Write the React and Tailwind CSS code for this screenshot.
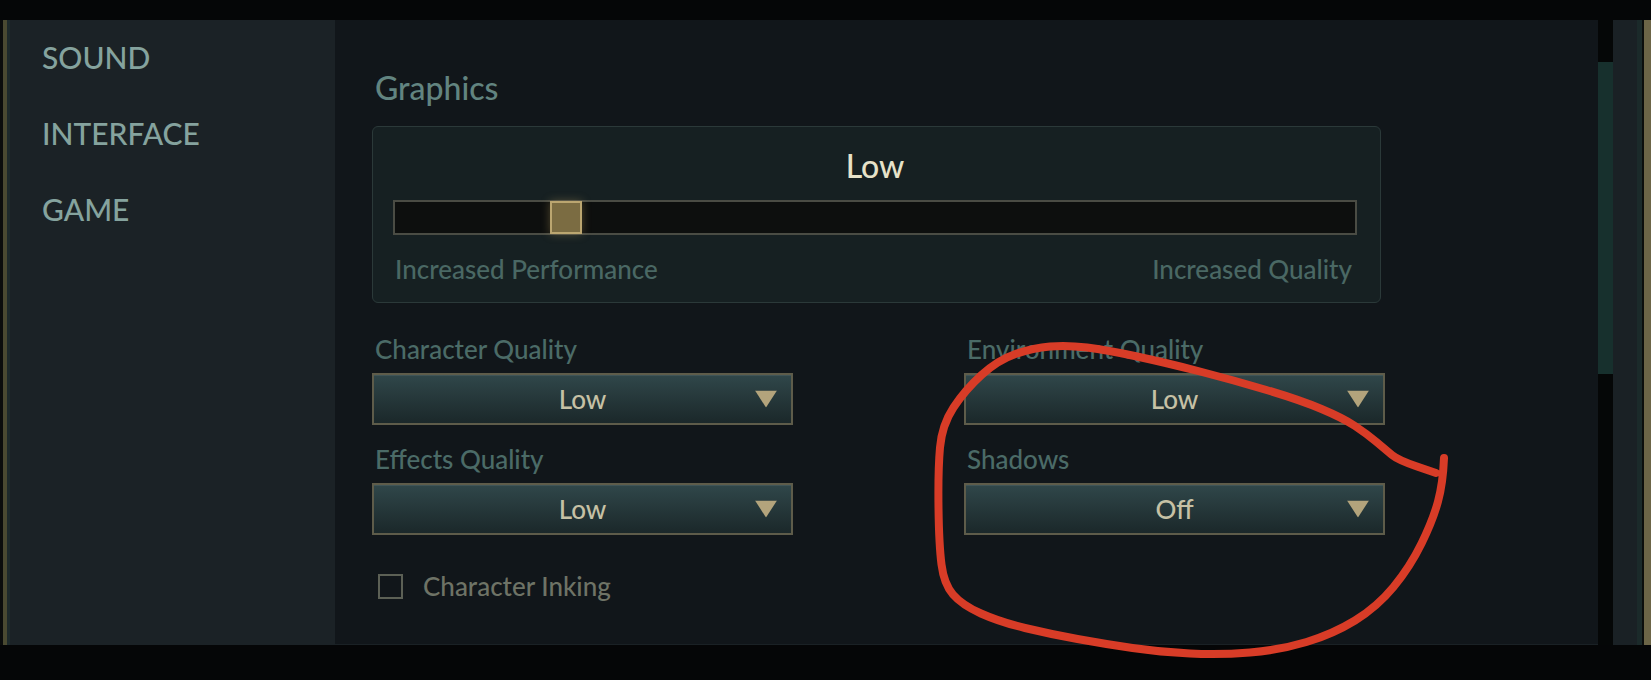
import React from 'react';

const menu = ['SOUND', 'INTERFACE', 'GAME'];

const fields = [
  { label: 'Character Quality', value: 'Low' },
  { label: 'Environment Quality', value: 'Low' },
  { label: 'Effects Quality', value: 'Low' },
  { label: 'Shadows', value: 'Off' },
];

// hand drawn red loop, page coordinates
const scribble = [
  [1444, 458], [1443, 483], [1433, 520], [1410, 567], [1377, 607], [1333, 634],
  [1280, 650], [1220, 655], [1160, 652], [1105, 644], [1050, 634], [1000, 622],
  [962, 605], [944, 584], [939, 545], [938, 470], [942, 425], [965, 390],
  [998, 360], [1033, 348], [1067, 345], [1107, 350], [1167, 363], [1233, 380],
  [1300, 400], [1343, 418], [1367, 434], [1386, 450], [1398, 460], [1436, 473],
];

function smoothPath(pts) {
  let d = `M${pts[0][0]} ${pts[0][1]}`;
  for (let i = 1; i < pts.length - 1; i++) {
    const mx = (pts[i][0] + pts[i + 1][0]) / 2;
    const my = (pts[i][1] + pts[i + 1][1]) / 2;
    d += ` Q${pts[i][0]} ${pts[i][1]} ${mx} ${my}`;
  }
  const last = pts[pts.length - 1];
  return d + ` L${last[0]} ${last[1]}`;
}

function Dropdown({ label, value }) {
  return (
    <div>
      <div className="pl-[3px] text-[26px] leading-none text-[#4b6b67]">{label}</div>
      <div className="relative mt-[11px] flex h-[52px] items-center justify-center border-2 border-[#5e5c4a] bg-linear-to-b from-[#30474a] to-[#1b282a] shadow-[inset_0_1px_0_rgba(255,255,255,0.08)]">
        <span className="text-[26px] leading-none text-[#c6c1a5]">{value}</span>
        <svg className="absolute right-[14px] top-1/2 -translate-y-1/2" width="22" height="17" viewBox="0 0 22 17">
          <path d="M0 0 H22 L11 17 Z" fill="#b3a47c" />
        </svg>
      </div>
    </div>
  );
}

export default function App() {
  return (
    <div className="relative h-[680px] w-[1651px] overflow-hidden bg-[#050607] font-[Lato,sans-serif] font-medium">
      <div className="h-[20px]" />
      <div className="flex h-[625px]">
        <div className="w-[3px] bg-[#0b0d0c]" />
        <div className="w-[4px] bg-[#4a4a31]" />
        <div className="w-[3px] bg-[#1e2a2b]" />

        <aside className="flex w-[325px] flex-col gap-[46px] bg-[#1b2226] pl-[32px] pt-[22px]">
          {menu.map(item => (
            <div key={item} className="text-[30px] leading-none text-[#85a39e]">{item}</div>
          ))}
        </aside>

        <main className="w-[1263px] border-b border-[#1a2125] bg-[#11161a] pl-[37px] pt-[52px]">
          <h1 className="ml-[3px] text-[32px] leading-none text-[#628480]">Graphics</h1>

          <div className="mt-[22px] h-[177px] w-[1009px] rounded-[6px] border border-[#2b3939] bg-[#162022] pl-[20px] pr-[23px] pt-[23px]">
            <div className="text-center text-[32px] leading-none text-[#e6e2c9]">Low</div>
            <div className="relative mt-[18px] h-[35px] border-2 border-[#4a4c44] bg-[#0d0f0e]">
              <div className="absolute -top-[1px] left-[155px] h-[33px] w-[32px] border-2 border-[#bba670] bg-[#7b6c42] shadow-[0_0_10px_rgba(200,170,100,0.35)]" />
            </div>
            <div className="mt-[21px] flex justify-between pl-[2px] pr-[5px] text-[26px] leading-none text-[#4a6864]">
              <span>Increased Performance</span>
              <span>Increased Quality</span>
            </div>
          </div>

          <div className="mt-[33px] grid w-[1013px] grid-cols-2 gap-x-[171px] gap-y-[21px]">
            {fields.map(f => (
              <Dropdown key={f.label} label={f.label} value={f.value} />
            ))}
          </div>

          <label className="ml-[6px] mt-[38px] flex items-center gap-[20px]">
            <span className="h-[25px] w-[25px] border-2 border-[#5c6055]" />
            <span className="text-[26px] leading-none text-[#6e7366]">Character Inking</span>
          </label>
        </main>

        <div className="w-[15px] bg-[#050707] pt-[42px]">
          <div className="h-[312px] bg-[#17302d]" />
        </div>
        <div className="w-[24px] bg-[#1a2125]" />
        <div className="w-[5px] bg-[#1b2a2a]" />
        <div className="w-[2px] bg-[#0c0e0c]" />
        <div className="w-[7px] bg-[#6c6547]" />
      </div>

      <svg className="pointer-events-none absolute left-0 top-0" width="1651" height="680" viewBox="0 0 1651 680">
        <path d={smoothPath(scribble)} fill="none" stroke="#d83c27" strokeWidth="8" strokeLinecap="round" strokeLinejoin="round" />
      </svg>
    </div>
  );
}
